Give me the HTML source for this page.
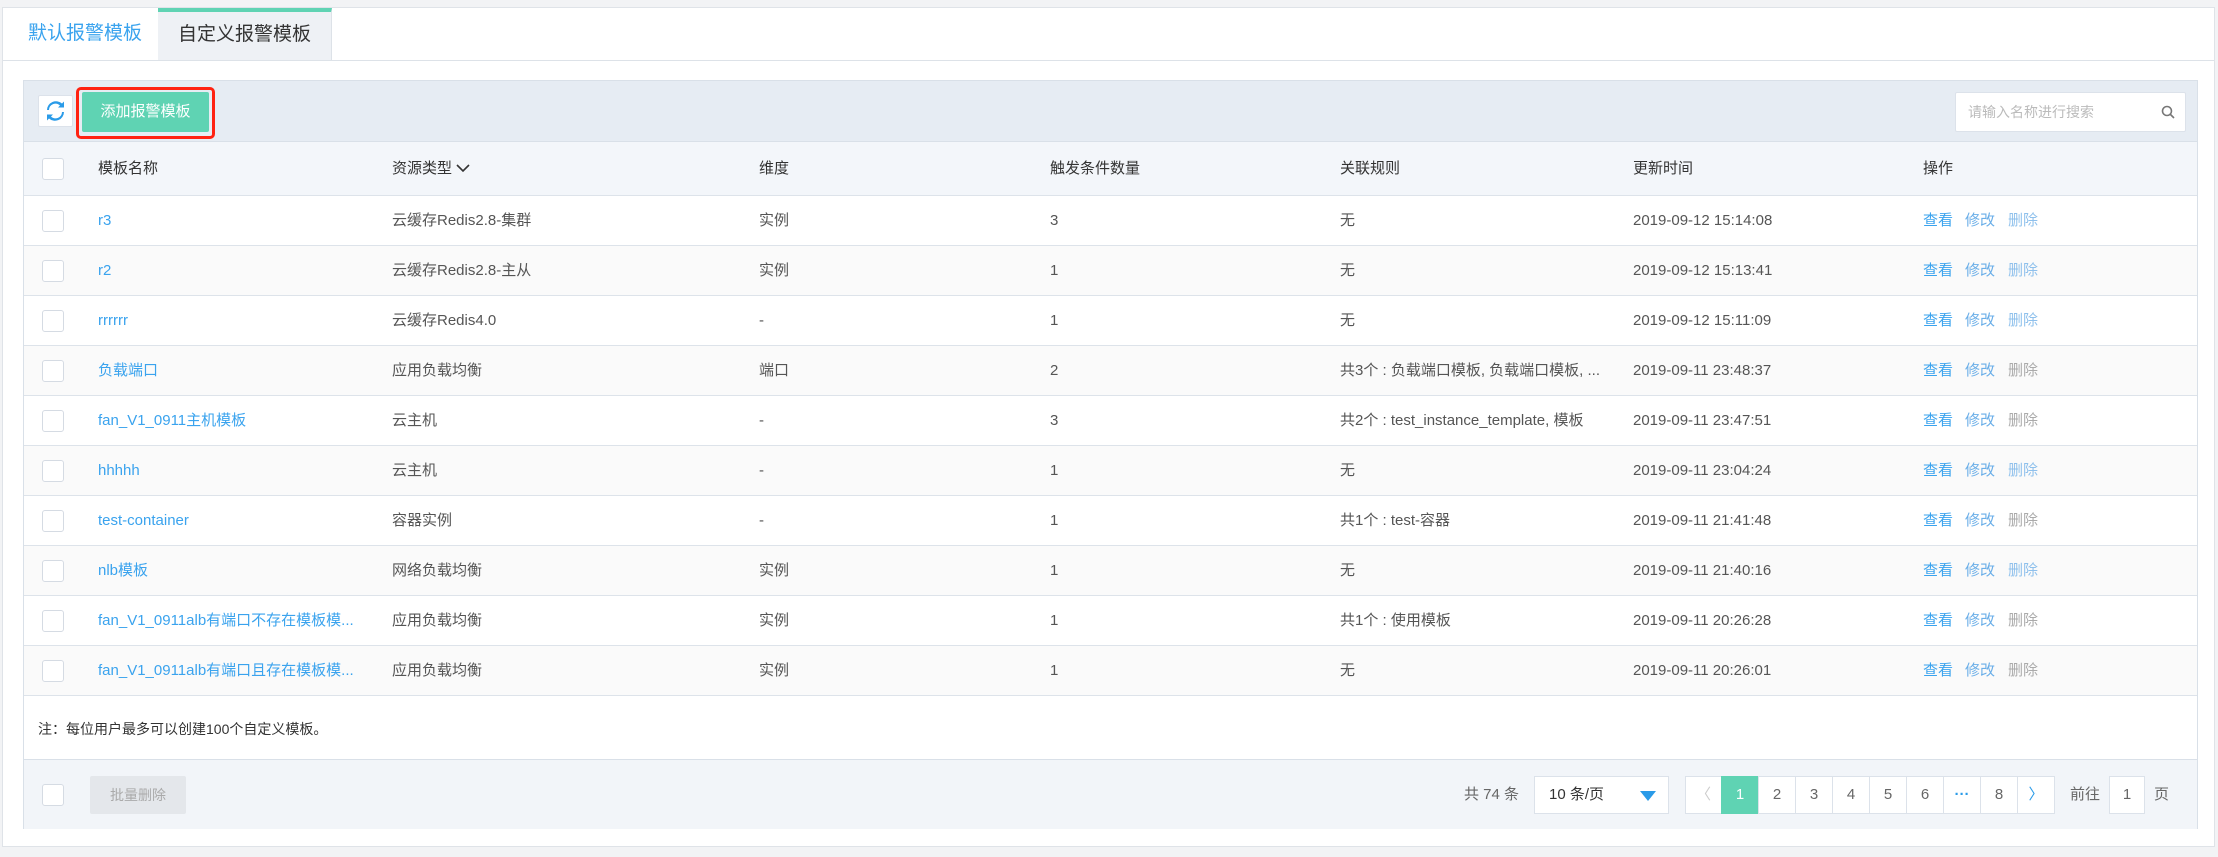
<!DOCTYPE html>
<html><head><meta charset="utf-8"><style>
*{box-sizing:border-box;margin:0;padding:0}
body{width:2218px;height:857px;background:#f2f3f5;font-family:"Liberation Sans","Noto Sans CJK SC",sans-serif;font-size:15px;color:#555;position:relative;overflow:hidden}
.panel{position:absolute;left:2px;top:7px;width:2213px;height:840px;background:#fff;border:1px solid #dfe3e8}
.tabs{position:absolute;left:0;top:0;width:100%;height:53px;border-bottom:1px solid #dde2e8}
.tab{position:absolute;top:0;height:52px;line-height:52px;font-size:19px}
.t1{left:0;width:155px;color:#3aa3ee;padding-left:25px}
.t2{left:155px;width:174px;background:#eef1f5;border-top:4px solid #5fd3b3;border-right:1px solid #dde2e8;color:#333;text-align:center;line-height:46px}
.box{position:absolute;left:20px;top:72px;width:2175px;height:749px;border:1px solid #d9e0e8;background:#fff}
.tool{position:absolute;left:0;top:0;width:100%;height:61px;background:#e6ecf3;border-bottom:1px solid #d9e0e8}
.ref{position:absolute;left:14px;top:14px;width:35px;height:32px;background:#fff;border:1px solid #dce2ea;border-radius:2px}
.red{position:absolute;left:52px;top:6px;width:139px;height:52px;border:3px solid #f21;border-radius:5px}
.add{position:absolute;left:58px;top:11px;width:127px;height:40px;background:#5fd3b3;color:#fff;font-size:15px;text-align:center;line-height:40px;border-radius:2px}
.search{position:absolute;right:11px;top:11px;width:231px;height:40px;background:#fff;border:1px solid #dce2ea;color:#bbb;font-size:14px;line-height:38px;padding-left:12px;border-radius:2px}
.row{position:absolute;left:0;width:100%;height:50px;border-bottom:1px solid #dde3ea;line-height:49px}
.hd{top:61px;height:54px;background:#f3f6fa;line-height:53px;color:#333}
.row span{position:absolute;white-space:nowrap}
.cb{position:absolute;left:18px;top:14px;width:22px;height:22px;border:1px solid #d5dbe3;border-radius:3px;background:#fff}
.hd .cb{top:16px}
.a{color:#3aa3ee}.b{color:#6aaee8}.g{color:#aaa}.c{color:#8ec0ec}
.alt{background:#fafafa}
.note{position:absolute;left:0;top:617px;width:100%;height:62px;line-height:62px;padding-left:14px;color:#333;font-size:14px;border-bottom:1px solid #d9e0e8}
.foot{position:absolute;left:0;top:679px;width:100%;height:69px;background:#f2f5f9}
.bd{position:absolute;left:66px;top:16px;width:96px;height:38px;background:#e4e7eb;color:#aaa;font-size:14px;text-align:center;line-height:38px;border-radius:2px}
.pg{position:absolute;top:16px;height:38px;line-height:36px;text-align:center;border:1px solid #dce2ea;background:#fff;color:#666;font-size:15px}
</style></head><body>
<div class="panel">
<div class="tabs"><div class="tab t1">默认报警模板</div><div class="tab t2">自定义报警模板</div></div>
<div class="box">
<div class="tool">
<div class="ref"><svg width="33" height="30" viewBox="0 0 33 30"><path d="M10 14a6.5 6.5 0 0 1 11-4.5l-2 2h6v-6l-2 2A9 9 0 0 0 8 14z M23 16a6.5 6.5 0 0 1-11 4.5l2-2H8v6l2-2a9 9 0 0 0 15-6.5z" fill="#2a9be8"/></svg></div>
<div class="red"></div><div class="add">添加报警模板</div>
<div class="search">请输入名称进行搜索<svg style="position:absolute;right:10px;top:12px" width="14" height="14" viewBox="0 0 14 14"><circle cx="6" cy="6" r="4.5" stroke="#777" stroke-width="1.6" fill="none"/><path d="M9.5 9.5L13 13" stroke="#777" stroke-width="1.6"/></svg></div>
</div>
<div class="row hd"><div class="cb"></div><span style="left:74px">模板名称</span><span style="left:368px">资源类型 <svg width="14" height="10" viewBox="0 0 14 10"><path d="M1 2l6 6 6-6" stroke="#333" stroke-width="1.6" fill="none"/></svg></span><span style="left:735px">维度</span><span style="left:1026px">触发条件数量</span><span style="left:1316px">关联规则</span><span style="left:1609px">更新时间</span><span style="left:1899px">操作</span></div>
<div style="position:absolute;left:0;top:115px;width:100%">
<div class="row" style="top:0"><div class="cb"></div><span class="a" style="left:74px">r3</span><span style="left:368px">云缓存Redis2.8-集群</span><span style="left:735px">实例</span><span style="left:1026px">3</span><span style="left:1316px">无</span><span style="left:1609px">2019-09-12 15:14:08</span><span class="a" style="left:1899px">查看</span><span class="b" style="left:1941px">修改</span><span class="c" style="left:1984px">删除</span></div>
<div class="row alt" style="top:50px"><div class="cb"></div><span class="a" style="left:74px">r2</span><span style="left:368px">云缓存Redis2.8-主从</span><span style="left:735px">实例</span><span style="left:1026px">1</span><span style="left:1316px">无</span><span style="left:1609px">2019-09-12 15:13:41</span><span class="a" style="left:1899px">查看</span><span class="b" style="left:1941px">修改</span><span class="c" style="left:1984px">删除</span></div>
<div class="row" style="top:100px"><div class="cb"></div><span class="a" style="left:74px">rrrrrr</span><span style="left:368px">云缓存Redis4.0</span><span style="left:735px">-</span><span style="left:1026px">1</span><span style="left:1316px">无</span><span style="left:1609px">2019-09-12 15:11:09</span><span class="a" style="left:1899px">查看</span><span class="b" style="left:1941px">修改</span><span class="c" style="left:1984px">删除</span></div>
<div class="row alt" style="top:150px"><div class="cb"></div><span class="a" style="left:74px">负载端口</span><span style="left:368px">应用负载均衡</span><span style="left:735px">端口</span><span style="left:1026px">2</span><span style="left:1316px">共3个 : 负载端口模板, 负载端口模板, ...</span><span style="left:1609px">2019-09-11 23:48:37</span><span class="a" style="left:1899px">查看</span><span class="b" style="left:1941px">修改</span><span class="g" style="left:1984px">删除</span></div>
<div class="row" style="top:200px"><div class="cb"></div><span class="a" style="left:74px">fan_V1_0911主机模板</span><span style="left:368px">云主机</span><span style="left:735px">-</span><span style="left:1026px">3</span><span style="left:1316px">共2个 : test_instance_template, 模板</span><span style="left:1609px">2019-09-11 23:47:51</span><span class="a" style="left:1899px">查看</span><span class="b" style="left:1941px">修改</span><span class="g" style="left:1984px">删除</span></div>
<div class="row alt" style="top:250px"><div class="cb"></div><span class="a" style="left:74px">hhhhh</span><span style="left:368px">云主机</span><span style="left:735px">-</span><span style="left:1026px">1</span><span style="left:1316px">无</span><span style="left:1609px">2019-09-11 23:04:24</span><span class="a" style="left:1899px">查看</span><span class="b" style="left:1941px">修改</span><span class="c" style="left:1984px">删除</span></div>
<div class="row" style="top:300px"><div class="cb"></div><span class="a" style="left:74px">test-container</span><span style="left:368px">容器实例</span><span style="left:735px">-</span><span style="left:1026px">1</span><span style="left:1316px">共1个 : test-容器</span><span style="left:1609px">2019-09-11 21:41:48</span><span class="a" style="left:1899px">查看</span><span class="b" style="left:1941px">修改</span><span class="g" style="left:1984px">删除</span></div>
<div class="row alt" style="top:350px"><div class="cb"></div><span class="a" style="left:74px">nlb模板</span><span style="left:368px">网络负载均衡</span><span style="left:735px">实例</span><span style="left:1026px">1</span><span style="left:1316px">无</span><span style="left:1609px">2019-09-11 21:40:16</span><span class="a" style="left:1899px">查看</span><span class="b" style="left:1941px">修改</span><span class="c" style="left:1984px">删除</span></div>
<div class="row" style="top:400px"><div class="cb"></div><span class="a" style="left:74px">fan_V1_0911alb有端口不存在模板模...</span><span style="left:368px">应用负载均衡</span><span style="left:735px">实例</span><span style="left:1026px">1</span><span style="left:1316px">共1个 : 使用模板</span><span style="left:1609px">2019-09-11 20:26:28</span><span class="a" style="left:1899px">查看</span><span class="b" style="left:1941px">修改</span><span class="g" style="left:1984px">删除</span></div>
<div class="row alt" style="top:450px"><div class="cb"></div><span class="a" style="left:74px">fan_V1_0911alb有端口且存在模板模...</span><span style="left:368px">应用负载均衡</span><span style="left:735px">实例</span><span style="left:1026px">1</span><span style="left:1316px">无</span><span style="left:1609px">2019-09-11 20:26:01</span><span class="a" style="left:1899px">查看</span><span class="b" style="left:1941px">修改</span><span class="g" style="left:1984px">删除</span></div>
</div>
<div class="note">注：每位用户最多可以创建100个自定义模板。</div>
<div class="foot">
<div class="cb" style="top:24px"></div>
<div class="bd">批量删除</div>
<span style="position:absolute;left:1440px;top:16px;line-height:38px;color:#666;font-size:15px">共 74 条</span>
<div class="pg" style="left:1510px;width:135px;text-align:left;padding-left:14px;color:#333">10 条/页<svg style="position:absolute;right:12px;top:14px" width="16" height="10" viewBox="0 0 16 10"><path d="M0 0h16L8 10z" fill="#2a9be8"/></svg></div>
<div class="pg" style="left:1661px;width:37px;color:#ccc">〈</div>
<div class="pg" style="left:1697px;width:38px;background:#5fd3b3;color:#fff;border-color:#5fd3b3">1</div>
<div class="pg" style="left:1734px;width:38px">2</div>
<div class="pg" style="left:1771px;width:38px">3</div>
<div class="pg" style="left:1808px;width:38px">4</div>
<div class="pg" style="left:1845px;width:38px">5</div>
<div class="pg" style="left:1882px;width:38px">6</div>
<div class="pg" style="left:1919px;width:38px;color:#2a9be8;font-weight:bold">···</div>
<div class="pg" style="left:1956px;width:38px">8</div>
<div class="pg" style="left:1993px;width:38px;color:#2a9be8">〉</div>
<span style="position:absolute;left:2046px;top:16px;line-height:38px;color:#666">前往</span>
<div class="pg" style="left:2085px;width:36px">1</div>
<span style="position:absolute;left:2130px;top:16px;line-height:38px;color:#666">页</span>
</div>
</div>
</div>
</body></html>
